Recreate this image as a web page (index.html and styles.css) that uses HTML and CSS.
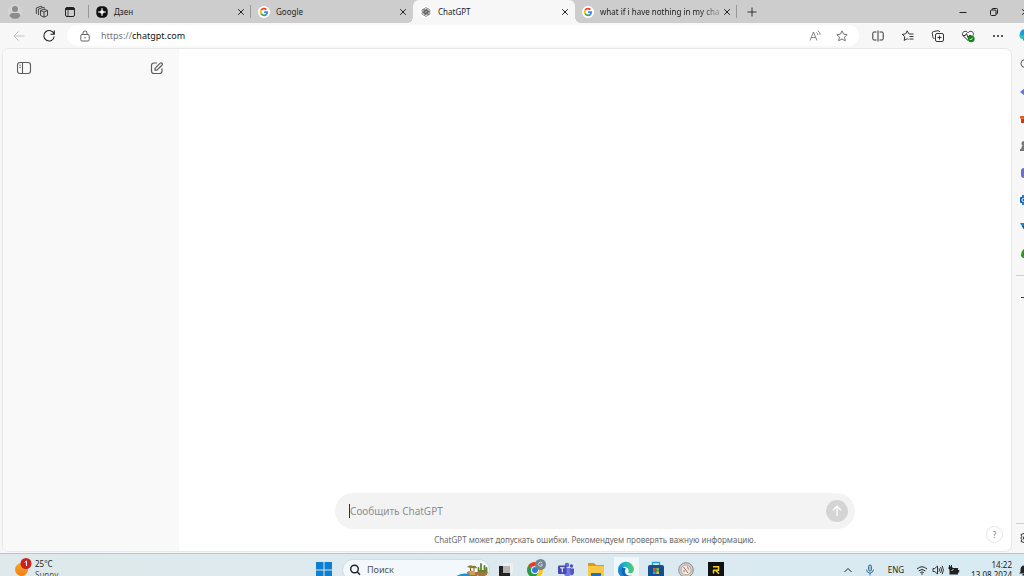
FILE: index.html
```html
<!DOCTYPE html>
<html lang="ru">
<head>
<meta charset="utf-8">
<title>ChatGPT</title>
<link rel="stylesheet" href="styles.css">
</head>
<body>
<svg class="defs" aria-hidden="true">
  <symbol id="google" viewBox="0 0 12 12">
    <circle cx="6" cy="6" r="6" fill="#fff"/>
    <g fill="none" stroke-width="1.7">
      <path d="M3.2 4.2A3.3 3.3 0 0 1 8.4 3.7" stroke="#ea4335"/>
      <path d="M3.3 7.8A3.3 3.3 0 0 1 3.3 4.1" stroke="#fbbc05"/>
      <path d="M8.3 8.5A3.3 3.3 0 0 1 3.2 7.6" stroke="#34a853"/>
      <path d="M6.1 6.1H9.3A3.3 3.3 0 0 1 8.1 8.6" stroke="#4285f4"/>
    </g>
  </symbol>
  <symbol id="close" viewBox="0 0 12 12"><path d="M3.2 3.2l5.6 5.6M8.8 3.2L3.2 8.8" stroke="#222" fill="none"/></symbol>
</svg>
<div class="screen">
  <header class="tabstrip">
    <div class="tools">
      <button class="icon-btn" aria-label="Профиль"><svg width="16" height="16" viewBox="0 0 16 16"><circle cx="8" cy="8" r="7.500" fill="#d6d4d2"/><circle cx="8" cy="5" r="3" fill="#8c8c8c"/><path d="M2.600 12c0-2 1.400-3 3-3h4.800c1.600 0 3 1 3 3-1.300 2-3.200 2.800-5.400 2.800S3.900 14 2.600 12z" fill="#8c8c8c"/></svg></button>
      <button class="icon-btn" aria-label="Рабочие области"><svg width="14" height="14" viewBox="0 0 14 14" fill="none" stroke="#333" stroke-width=".9" stroke-linejoin="round"><path d="M5.500 5.500L9 4.200l3.500 1.300v5L9 12.200l-3.500-1.700zM5.500 5.500L9 7l3.500-1.500M9 7v5M3.400 10V4.200L8 2.400l2 .8M1.300 8.800V3L5.700 1.300l1.500.5"/></svg></button>
      <button class="icon-btn" aria-label="Вкладки"><svg width="12" height="12" viewBox="0 0 12 12"><rect x="1.500" y="1.500" width="9" height="9" rx="1.500" fill="none" stroke="#222"/><path d="M1.500 2h9v2h-9z" fill="#222"/><path d="M4 4v6" stroke="#222" stroke-width=".8"/></svg></button>
    </div>
    <nav class="tabs">
      <div class="tab">
        <svg class="fav" viewBox="0 0 12 12"><rect x=".3" y=".3" width="11.400" height="11.400" rx="4.500" fill="#111"/><path d="M6 2c.3 2.900 1.100 3.700 4 4-2.900.3-3.700 1.100-4 4-.3-2.900-1.100-3.700-4-4 2.900-.3 3.700-1.100 4-4z" fill="#fff" stroke="#fff" stroke-width=".5"/></svg>
        <a class="tab-title" href="#">Дзен</a>
        <button class="icon-btn" aria-label="Закрыть"><svg width="12" height="12"><use href="#close"/></svg></button>
      </div>
      <div class="tab">
        <svg class="fav"><use href="#google"/></svg>
        <a class="tab-title" href="#">Google</a>
        <button class="icon-btn" aria-label="Закрыть"><svg width="12" height="12"><use href="#close"/></svg></button>
      </div>
      <div class="tab active">
        <svg class="fav" viewBox="0 0 12 12" fill="none" stroke="#555" stroke-width=".7"><circle cx="6" cy="6" r="6" fill="#fff" stroke="none"/><g stroke-linejoin="round"><path id="petal" d="M4.300 7V3.300a1.700 1.700 0 0 1 3.200-.7L5 4.200v2.400"/><use href="#petal" transform="rotate(60 6 6)"/><use href="#petal" transform="rotate(120 6 6)"/><use href="#petal" transform="rotate(180 6 6)"/><use href="#petal" transform="rotate(240 6 6)"/><use href="#petal" transform="rotate(300 6 6)"/></g></svg>
        <a class="tab-title" href="#">ChatGPT</a>
        <button class="icon-btn" aria-label="Закрыть"><svg width="12" height="12"><use href="#close"/></svg></button>
      </div>
      <div class="tab">
        <svg class="fav"><use href="#google"/></svg>
        <a class="tab-title fade" href="#">what if i have nothing in my chat</a>
        <button class="icon-btn" aria-label="Закрыть"><svg width="12" height="12"><use href="#close"/></svg></button>
      </div>
    </nav>
    <button class="icon-btn new-tab" aria-label="Новая вкладка"><svg width="12" height="12" viewBox="0 0 12 12"><path d="M6 1.500v9M1.500 6h9" stroke="#333"/></svg></button>
    <div class="window-btns">
      <button class="icon-btn" aria-label="Свернуть"><svg width="12" height="12"><path d="M2.500 6.500h7" stroke="#222"/></svg></button>
      <button class="icon-btn" aria-label="Восстановить"><svg width="12" height="12" fill="none" stroke="#222"><rect x="2.500" y="4" width="5.500" height="5.500" rx="1"/><path d="M4 4V3.500a1 1 0 0 1 1-1h3.500a1 1 0 0 1 1 1V7a1 1 0 0 1-1 1H8"/></svg></button>
      <button class="icon-btn" aria-label="Закрыть окно"><svg width="12" height="12"><use href="#close"/></svg></button>
    </div>
  </header>

  <div class="toolbar">
    <button class="icon-btn" aria-label="Назад"><svg width="14" height="14" fill="none" stroke="#c4c4c4"><path d="M12.500 7H2M6.500 2.500L2 7l4.500 4.500"/></svg></button>
    <button class="icon-btn" aria-label="Обновить"><svg width="14" height="14" fill="none" stroke="#222" stroke-width="1.100"><path d="M12 5.200A5.200 5.200 0 1 0 12.200 7.500M12.300 1.500v3.800H8.500"/></svg></button>
    <form class="address">
      <button type="button" class="icon-btn" aria-label="О сайте"><svg width="12" height="12" fill="none" stroke="#666"><rect x="1.800" y="4.500" width="8.400" height="6.500" rx="1.200"/><path d="M4 4.500V3a2 2 0 0 1 4 0v1.500"/><circle cx="6" cy="7.700" r=".7" fill="#555" stroke="none"/></svg></button>
      <a class="url" href="#"><span>https://</span>chatgpt.com</a>
      <button type="button" class="icon-btn" aria-label="Читать вслух"><svg width="14" height="14" fill="none" stroke="#777" stroke-width=".9"><path d="M2 11.500L5.500 3 9 11.500M3.200 8.500h4.600M8.500 3.500q1.200.9 1.300 2.500M10 1.800q2 1.500 2.100 4"/></svg></button>
      <button type="button" class="icon-btn" aria-label="В избранное"><svg width="14" height="14" fill="none" stroke="#777"><path d="M7 1.800l1.600 3.400 3.600.4-2.700 2.500.8 3.700L7 10l-3.300 1.800.8-3.700L1.800 5.600l3.600-.4z" stroke-linejoin="round"/></svg></button>
    </form>
    <div class="actions">
      <button class="icon-btn" aria-label="Разделить экран"><svg width="14" height="14" fill="none" stroke="#333"><path d="M5.500 3H3a1.200 1.200 0 0 0-1.200 1.200v5.600A1.200 1.200 0 0 0 3 11h2.500M8.500 3H11a1.200 1.200 0 0 1 1.200 1.200v5.600A1.200 1.200 0 0 1 11 11H8.500M7 1.500v11"/></svg></button>
      <button class="icon-btn" aria-label="Избранное"><svg width="14" height="14" fill="none" stroke="#333" stroke-linejoin="round"><path d="M8.500 5L8 5 6.200 1.800 4.700 4.900l-3.400.5 2.500 2.400-.6 3.600 3-1.700 1.300.8M8.500 5h4M8.500 7.500h4M8.500 10h4"/></svg></button>
      <button class="icon-btn" aria-label="Коллекции"><svg width="14" height="14" fill="none" stroke="#333"><path d="M3.500 9.500L2.800 9.200a1.500 1.500 0 0 1-1-1.900l-.5-3a1.500 1.500 0 0 1 1.300-1.800l4.500-.8q1.200 0 1.700 1.300"/><rect x="4.500" y="4.500" width="8" height="8" rx="1.500"/><path d="M8.500 6.500v4M6.500 8.500h4"/></svg></button>
      <button class="icon-btn" aria-label="Производительность"><svg width="14" height="14" fill="none" stroke="#333"><path d="M7 11.500L2 6.700C-.3 3.500 4.500.5 7 3.700 9.500.5 14 3.500 12 6.500M1.800 6.500h2.500l1.200-2 1.500 4 1.200-2h2"/><circle cx="10.200" cy="9.800" r="3.400" fill="#14801e" stroke="none"/><path d="M8.700 10l1 1 2-2.300" stroke="#fff" stroke-width=".9"/></svg></button>
      <button class="icon-btn" aria-label="Меню"><svg width="14" height="14" fill="#222"><circle cx="3" cy="7" r="1"/><circle cx="7" cy="7" r="1"/><circle cx="11" cy="7" r="1"/></svg></button>
      <button class="icon-btn copilot" aria-label="Copilot"><svg width="16" height="16"><path d="M3.500 1.500h8l-3 6H.5q.5-4.500 3-6z" fill="#199bd8"/><path d="M.5 7h8v4H3Q.5 10.500.5 7z" fill="#29c3a8"/><path d="M4 11h8v3.500H7Q5 14 4 11z" fill="#2563eb"/></svg></button>
    </div>
  </div>

  <div class="workspace">
    <main class="page">
      <aside class="history">
        <button class="icon-btn" aria-label="Боковая панель"><svg width="16" height="14" fill="none" stroke="#5d5d5d" stroke-width="1.100"><rect x="1.500" y="1.500" width="13" height="11" rx="2.500"/><path d="M6.500 1.500v11M3.300 4.300h1.500M3.300 6.500h1.500"/></svg></button>
        <button class="icon-btn" aria-label="Новый чат"><svg width="14" height="14" fill="none" stroke="#5d5d5d" stroke-width="1.200" stroke-linejoin="round"><path d="M7 2H4Q1.500 2 1.500 4.500v5.500Q1.500 12.500 4 12.500h5.500Q12 12.500 12 10V7.500M5 9.200V7.300l5.200-5.200q.9-.7 1.800.1t.1 1.800L7 9.200z"/></svg></button>
      </aside>
      <section class="chat">
        <form class="composer">
          <span class="caret"></span>
          <input class="prompt" type="text" placeholder="Сообщить ChatGPT" aria-label="Сообщить ChatGPT">
          <button type="button" class="send" aria-label="Отправить"><svg width="14" height="14" fill="none" stroke="#fff" stroke-width="1.300"><path d="M7 12V2.500M3 6.200l4-4 4 4"/></svg></button>
        </form>
        <p class="note">ChatGPT может допускать ошибки. Рекомендуем проверять важную информацию.</p>
        <button class="help">?</button>
      </section>
    </main>
    <aside class="rail">
      <button class="icon-btn" aria-label="Поиск"><svg width="12" height="12" fill="none" stroke="#555"><circle cx="5" cy="4.500" r="4"/></svg></button>
      <button class="icon-btn" aria-label="Покупки"><svg width="12" height="12"><path d="M0 6l6-5v10z" fill="#5b7fe0"/></svg></button>
      <button class="icon-btn" aria-label="Инструменты"><svg width="12" height="12"><path d="M0 3h12v2.500H0z" fill="#e8591c"/><path d="M1 5.500h11V10H1z" fill="#c93a16"/></svg></button>
      <button class="icon-btn" aria-label="Игры"><svg width="12" height="12" fill="#777"><circle cx="4" cy="3.500" r="2.500"/><path d="M2 6h6v3H1z"/><path d="M0 9h10v2H0z"/></svg></button>
      <button class="icon-btn" aria-label="Microsoft 365"><svg width="12" height="12"><rect x="1" y="1" width="11" height="10" rx="3" fill="#6472d2"/></svg></button>
      <button class="icon-btn" aria-label="Outlook"><svg width="12" height="12"><path d="M2 1h10v10H2z" fill="#1683d8"/><rect y="3" width="7" height="6" rx="1" fill="#0b62b5"/><circle cx="3.500" cy="6" r="1.600" fill="none" stroke="#fff"/></svg></button>
      <button class="icon-btn" aria-label="Drop"><svg width="12" height="12"><path d="M0 2h12L5 10z" fill="#1488ce"/><path d="M2 5h8L5 10z" fill="#134d83"/></svg></button>
      <button class="icon-btn" aria-label="Дерево"><svg width="12" height="12"><path d="M6 0Q1 2 1 8q2 3 6 2z" fill="#279b20"/></svg></button>
      <hr>
      <button class="icon-btn" aria-label="Добавить"><svg width="12" height="12"><path d="M1 6.500h10" stroke="#333"/></svg></button>
      <hr class="low">
      <button class="icon-btn" aria-label="Параметры"><svg width="12" height="12" fill="none" stroke="#333"><path d="M4 1.500L1 2.500l.8 2.200L.8 6l1 1.500L1 9.500l3 1"/><circle cx="5" cy="6" r="1.700"/></svg></button>
    </aside>
  </div>

  <footer class="taskbar">
    <a class="weather" href="#">
      <svg width="18" height="20" viewBox="0 0 18 20"><defs><linearGradient id="sun" x2="0" y2="1"><stop stop-color="#f5a52a"/><stop offset="1" stop-color="#f07f16"/></linearGradient></defs><circle cx="6.500" cy="12.500" r="6.500" fill="url(#sun)"/><circle cx="11" cy="6.500" r="5.500" fill="#c9211e"/><path d="M9.700 5.500l1.800-1.500v5" fill="none" stroke="#fff"/></svg>
      <span class="weather-text"><span>25°C</span><span>Sunny</span></span>
    </a>
    <div class="dock">
      <button class="app" aria-label="Пуск"><svg width="16" height="16"><path d="M0 0h7.500v7.500H0zM8.500 0H16v7.500H8.500zM0 8.500h7.500V16H0zM8.500 8.500H16V16H8.500z" fill="#0f7fd2"/></svg></button>
      <label class="search">
        <svg width="12" height="12" fill="none" stroke="#222" stroke-width="1.400"><circle cx="5.500" cy="5" r="3.800"/><path d="M8.200 7.800L11 10.800"/></svg>
        <input type="text" placeholder="Поиск">
        <svg width="34" height="22" viewBox="0 0 34 22"><path d="M0 18q6-5 14-3 5 0 8-1v8H0z" fill="#1d91d4"/><path d="M12 13q4-2 8 0h13l-1 3-5 2-6-2-9-1z" fill="#a57645"/><path d="M13 13q3-3 7 0v3h-5z" fill="#d29b55"/><path d="M15.500 12V8M19 12V9" stroke="#8c642e"/><path d="M12 8q3-3 6-1 3-1 4 2-5 1-10-1z" fill="#8c7a3a"/><path d="M26 13V5M29.500 13V7M23.500 9v3h8V9" stroke="#65852c" stroke-width="1.800" fill="none" stroke-linecap="round"/></svg>
      </label>
      <button class="app" aria-label="Представление задач"><svg width="16" height="16"><path d="M1 4h11v12H1z" fill="#222"/><path d="M5 1h10v10H5z" fill="#eee"/><path d="M5 4h7v7H5z" fill="#b3b3b3"/></svg></button>
      <button class="app" aria-label="Chrome"><svg width="20" height="24" viewBox="0 0 20 24"><circle cx="9" cy="12" r="8" fill="#f8c51c"/><path d="M9 12L2.100 8a8 8 0 0 1 13.800 0z" fill="#e33b2e"/><path d="M9 12L2.100 8A8 8 0 0 0 9 20l3.500-6z" fill="#279b48"/><circle cx="9" cy="12" r="4" fill="#fff"/><circle cx="9" cy="12" r="3" fill="#2d7ae5"/><circle cx="14.500" cy="6.500" r="5.500" fill="#71858f"/><path d="M16.200 5.200a2 2 0 1 0 .2 1.600h-1.600" fill="none" stroke="#d5dde0"/></svg></button>
      <button class="app" aria-label="Teams"><svg width="16" height="16"><circle cx="9" cy="3" r="2.300" fill="#6669d0"/><circle cx="13.500" cy="4" r="1.700" fill="#4f55b8"/><path d="M6 6h7v5q-1 4-4 4-3-1-3-4z" fill="#747ae0"/><path d="M12 6.500h4V11q-1 3-3.500 2z" fill="#5058bd"/><rect y="3.500" width="8.500" height="8.500" rx="1" fill="#464ab0"/><path d="M2 5.800h4.500M4.250 5.800v4.500" stroke="#fff"/></svg></button>
      <button class="app" aria-label="Проводник"><svg width="18" height="18"><path d="M1 2h6l2 2h8v14H1z" fill="#d99a1b"/><path d="M1 5h16v13H1z" fill="#fbc845"/><path d="M4 12h10v6H4z" fill="#1674c4"/></svg></button>
      <button class="app current" aria-label="Edge"><svg width="18" height="18" viewBox="0 0 18 18"><defs><linearGradient id="edge"><stop stop-color="#1689d5"/><stop offset=".5" stop-color="#23b8c6"/><stop offset="1" stop-color="#5cce55"/></linearGradient></defs><path d="M1 9a8 8 0 0 0 13.500 5.700Q9 15.500 8 11 7.500 9 9 7.500L4 6z" fill="#1264b5"/><path d="M1 9a8 8 0 0 1 16-.5c0 3.500-3.500 4.500-6 3q1.500-2 0-4Q7 3.500 1 9z" fill="url(#edge)"/><path d="M1 9q2-4 6-3.500Q4 8 5 12q1.500 4 6 4.700Q2 18 1 9z" fill="#1b87d0"/></svg></button>
      <button class="app" aria-label="Microsoft Store"><svg width="16" height="18"><path d="M4.500 5V1.500h7V5" fill="none" stroke="#22a4df" stroke-width="1.300"/><rect y="4" width="16" height="14" rx="2" fill="#164f91"/><path d="M5 7h2.700v2.700H5z" fill="#f05a2b"/><path d="M8.300 7H11v2.700H8.300z" fill="#82bd32"/><path d="M5 10.300h2.700V13H5z" fill="#23a8e9"/><path d="M8.300 10.300H11V13H8.300z" fill="#fdbb22"/></svg></button>
      <button class="app" aria-label="Часы"><svg width="16" height="16"><circle cx="8" cy="8" r="7.300" fill="#d3cfcd" stroke="#8d8b8b"/><circle cx="8" cy="8" r="5" fill="#f2e7e2" stroke="#a8918a" stroke-width=".7"/><path d="M5.500 5l4.500 6M9.500 4.500l1 3M6 8v2" stroke="#8d6a60" stroke-width=".9" fill="none"/></svg></button>
      <button class="app" aria-label="Rockstar"><svg width="16" height="16"><path d="M0 0h16v16H0z" fill="#111"/><path d="M5 4.800h5.500v3.400H5M7.500 8.200l3.500 3.500M5.500 8v3.500" fill="none" stroke="#f0d21d" stroke-width="1.500"/></svg></button>
    </div>
    <div class="tray">
      <button class="icon-btn" aria-label="Скрытые значки"><svg width="12" height="12" fill="none" stroke="#222"><path d="M2.500 8L6 4.500 9.500 8"/></svg></button>
      <button class="icon-btn mic" aria-label="Микрофон"><svg width="12" height="12" fill="none" stroke="#3b6f94"><rect x="4.500" y="1" width="3" height="6" rx="1.500" fill="#9cc0d6"/><path d="M2.500 5.500q.3 3.500 3.500 3.500t3.500-3.500M6 9v2.500"/></svg></button>
      <button class="lang">ENG</button>
      <button class="status" aria-label="Сеть, звук, батарея">
        <svg width="12" height="12" fill="none" stroke="#222"><path d="M1 5q5-4.500 10 0M2.700 6.900q3.300-3 6.600 0M4.300 8.600q1.700-1.500 3.400 0"/><circle cx="6" cy="10" r=".8" fill="#222" stroke="none"/></svg>
        <svg width="12" height="12" fill="none" stroke="#222" stroke-width=".9"><path d="M1 4.500h1.700L5.500 2v8L2.700 7.500H1zM7 4.300q1 1.700 0 3.400M8.600 3q1.900 3 0 6M10.200 1.800q2.400 4.200 0 8.400"/></svg>
        <svg width="12" height="12"><path d="M1.500 4H10v6.500H1.500z" fill="#222"/><path d="M10 6h1.200v2.500H10z" fill="#222"/><path d="M1 3h3v2H1zM1.500 1v2M3.500 1v2" stroke="#222" fill="#222"/><path d="M5.500 5l-2 2" stroke="#dcebf1"/></svg>
      </button>
      <button class="clock"><span>14:22</span><span>13.08.2024</span></button>
      <button class="icon-btn" aria-label="Уведомления"><svg width="12" height="12"><path d="M1 9.500L2.500 8V5q.5-3.500 3.500-3.500T9.500 5v3L11 9.500zM4.500 10h3v1.500h-3z" fill="#222"/></svg></button>
    </div>
  </footer>
</div>
</body>
</html>
```
FILE: styles.css
```css
* { box-sizing: border-box; }
html, body { height: 100%; margin: 0; }
body { font-family: "Noto Sans", "Open Sans", sans-serif; font-size: 8px; color: #222; overflow: hidden; }
button, input { font: inherit; color: inherit; border: 0; padding: 0; margin: 0; background: none; outline: 0; }
a { color: inherit; text-decoration: none; }
svg { display: block; flex: none; }
.defs { position: absolute; width: 0; height: 0; }
.icon-btn { display: flex; align-items: center; justify-content: center; flex: none; }

.screen { display: flex; flex-direction: column; height: 100vh; overflow: hidden; background: #f7f7f7; }

.tabstrip { display: flex; flex: none; height: 23px; background: #cdcdcd; overflow: hidden; }
.tools { display: flex; align-items: center; gap: 15px; width: 89px; padding-left: 7px; flex: none; position: relative; }
.tools .icon-btn:nth-child(2) { margin-left: -3px; }
.tools::after, .tab:not(.active)::after { content: ""; position: absolute; right: 0; top: 5px; width: 1px; height: 13px; background: #999; }
.tabs { display: flex; flex: 0 1 648px; min-width: 0; }
.tab { position: relative; display: flex; align-items: center; flex: 1 1 0; min-width: 0; gap: 6px; padding: 0 4px 0 7px; }
.tab:nth-child(2)::after { display: none; }
.tab.active { background: #f7f7f7; border-radius: 6px 6px 0 0; }
.tab.active::before, .tab.active::after { content: ""; position: absolute; bottom: 0; width: 6px; height: 6px; }
.tab.active::before { right: 100%; background: radial-gradient(circle at 0 0, #cdcdcd 6px, #f7f7f7 6px); }
.tab.active::after { left: 100%; background: radial-gradient(circle at 100% 0, #cdcdcd 6px, #f7f7f7 6px); }
.fav { width: 12px; height: 12px; }
.tab-title { flex: 1; min-width: 0; white-space: nowrap; }
.tab-title.fade { margin-right: -4px; mask-image: linear-gradient(to right, #000 84%, rgba(0, 0, 0, .3) 100%); }
.new-tab { margin-left: 9px; }
.window-btns { display: flex; gap: 19px; margin-left: auto; margin-right: -7px; }

.toolbar { display: flex; align-items: center; flex: none; height: 25px; padding-left: 12px; overflow: hidden; }
.toolbar > .icon-btn { margin-right: 16px; }
.toolbar > .icon-btn + .icon-btn { margin-right: 11px; }
.address { display: flex; align-items: center; flex: 1; min-width: 0; height: 21px; gap: 13px; padding: 0 10px 0 12px; border-radius: 11px; background: #fff; }
.url { flex: 1; margin-left: -3px; font-size: 9px; color: #111; }
.url span { color: #777; }
.actions { display: flex; gap: 16px; margin-left: 12px; margin-right: -11px; }
.copilot { margin-left: -2px; }

.workspace { display: flex; flex: 1; min-height: 0; padding: 0 0 1px 2px; }
.page { display: flex; flex: 1; min-width: 0; border: 1px solid #e7e7e7; border-radius: 7px; background: #fff; overflow: hidden; }
.history { display: flex; align-items: flex-start; justify-content: space-between; flex: none; width: 176px; padding: 12px 15px 0 13px; background: #f9f9f9; }
.chat { position: relative; display: flex; flex: 1; flex-direction: column; align-items: center; justify-content: flex-end; min-width: 0; }
.composer { display: flex; align-items: center; width: 100%; max-width: 520px; height: 36px; padding: 0 7px 0 14px; border-radius: 18px; background: #f3f3f3; }
.caret { width: 1px; height: 14px; background: #333; }
.prompt { flex: 1; min-width: 0; font-size: 10px; }
.prompt::placeholder { color: #8e8e8e; opacity: 1; }
.send { display: grid; place-items: center; flex: none; width: 22px; height: 22px; border-radius: 50%; background: #d4d4d4; }
.note { margin: 5px 0; line-height: 12px; color: #6b6b6b; white-space: nowrap; }
.help { position: absolute; right: 8px; bottom: 8px; width: 17px; height: 17px; border: 1px solid #e5e5e5; border-radius: 50%; background: #fff; color: #777; }

.rail { display: flex; flex: none; flex-direction: column; align-items: flex-start; gap: 15px; width: 12px; padding: 11px 0 8px 8px; overflow: hidden; }
.rail hr { width: 100%; margin: 0 0 0 -4px; min-width: 10px; border: 0; border-top: 1px solid #d0d0d0; flex: none; }
.rail .low { margin-top: auto; margin-bottom: -7px; }

.taskbar { display: grid; grid-template-columns: minmax(0, 1fr) auto minmax(0, 1fr); flex: none; height: 23px; padding-left: 15px; border-top: 1px solid #b9c4c9; background: linear-gradient(to right, #dfe9ec, #d8eaf2); overflow: hidden; }
.weather { display: flex; gap: 2px; height: 32px; align-items: flex-start; padding-top: 4px; }
.weather svg { margin-top: -1px; }
.weather-text { display: flex; flex-direction: column; line-height: 11px; }
.weather-text span + span { color: #555; }
.dock { display: flex; align-items: center; height: 31px; padding-left: 1px; }
.app { display: grid; place-items: center; flex: none; width: 30px; height: 26px; border-radius: 3px; }
.current { background: linear-gradient(#eff7fa, #eff7fa) center / 25px 100% no-repeat; }
.search { display: flex; align-items: center; gap: 6px; width: 148px; height: 22px; margin: 0 1px 0 3px; padding-left: 6px; border-radius: 11px; background: #f2f8fb; border: 1px solid #cfdce2; overflow: hidden; }
.search input { flex: 1; min-width: 0; font-size: 9px; }
.search input::placeholder { color: #555; opacity: 1; }
.tray { display: flex; align-items: center; justify-content: flex-end; height: 31px; margin-right: -6px; }
.mic { margin: 0 12px 0 10px; }
.status { display: flex; gap: 4px; margin: 0 11px 0 12px; }
.clock { display: flex; flex-direction: column; align-items: flex-end; line-height: 10px; margin-right: 6px; }
```
